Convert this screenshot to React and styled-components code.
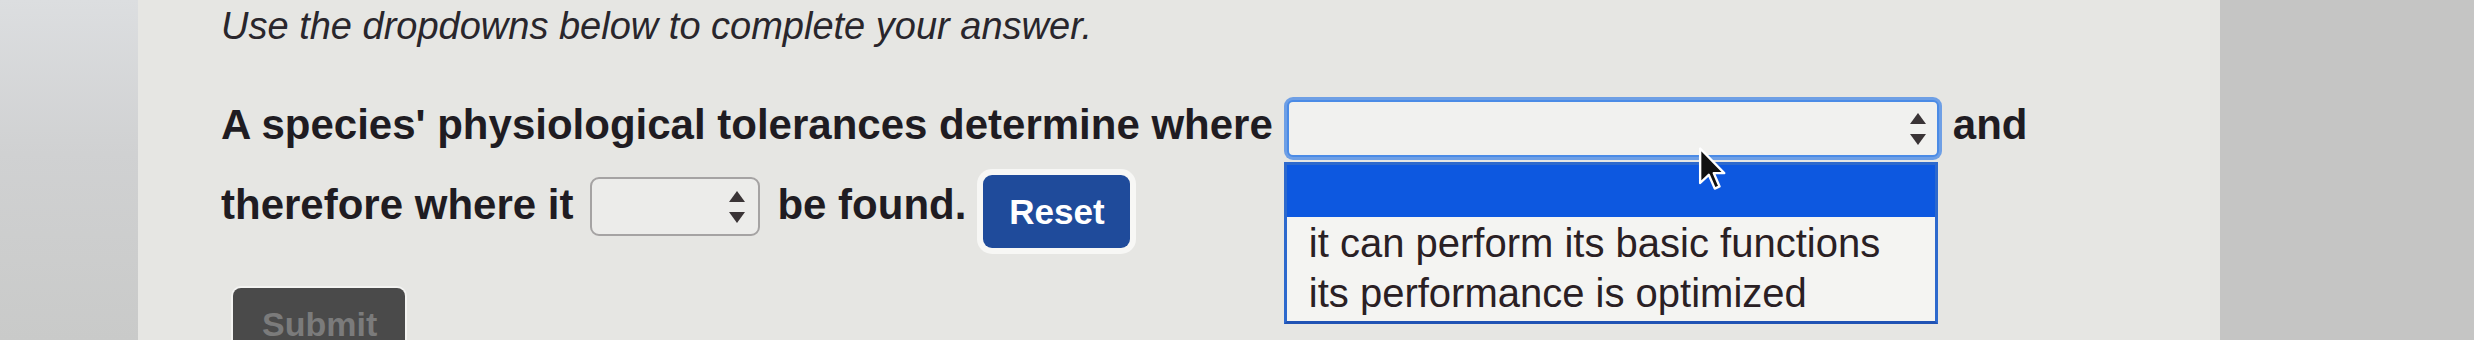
import React from "react";
import styled, { createGlobalStyle } from "styled-components";

const GlobalStyle = createGlobalStyle`
  html, body {
    margin: 0;
    padding: 0;
    height: 340px;
    overflow: hidden;
    background: #e4e4e2;
  }
  body {
    font-family: "Liberation Sans", Arial, Helvetica, sans-serif;
  }
`;

const options = [
  "it can perform its basic functions",
  "its performance is optimized",
];

const SpinArrows = () => (
  <svg width="18" height="32" viewBox="0 0 18 32">
    <polygon points="1,11 9,0 17,11" fill="#3a3436" />
    <polygon points="1,21 9,32 17,21" fill="#3a3436" />
  </svg>
);

const Cursor = () => (
  <svg width="28" height="46" viewBox="-1 -1 13 21">
    <path
      d="M0 0 L0 16 L4 12.2 L6.8 18.6 L9 17.6 L6.3 11.4 L11.2 11.4 Z"
      fill="#111"
      stroke="#fff"
      strokeWidth="1.1"
      strokeLinejoin="round"
    />
  </svg>
);

const App = () => {
  return (
    <>
      <GlobalStyle />
      <Page>
        <LeftStrip />
        <Main>
          <Instruction>Use the dropdowns below to complete your answer.</Instruction>

          <Row $mt={52} $gap={14}>
            <BoldText $lh={49}>A species' physiological tolerances determine where</BoldText>
            <SelectBox $w={652} $h={57} $focused>
              <SpinArrows />
              <ListBox>
                <Highlight />
                {options.map((o) => (
                  <Option key={o}>{o}</Option>
                ))}
              </ListBox>
              <CursorSpot>
                <Cursor />
              </CursorSpot>
            </SelectBox>
            <BoldText $lh={49}>and</BoldText>
          </Row>

          <Row $mt={18} $gap={17}>
            <BoldText $lh={59}>therefore where it</BoldText>
            <SelectBox $w={170} $h={59} $mt={2}>
              <SpinArrows />
            </SelectBox>
            <BoldText $lh={59}>be found.</BoldText>
            <ResetButton>Reset</ResetButton>
          </Row>

          <SubmitButton>Submit</SubmitButton>
        </Main>
        <RightStrip />
      </Page>
    </>
  );
};

export default App;

const Page = styled.div`
  display: flex;
  height: 340px;
  overflow: hidden;
`;

const LeftStrip = styled.div`
  width: 138px;
  flex-shrink: 0;
  background: linear-gradient(180deg, #dcdee0 0%, #d0d1d2 45%, #c9cac9 100%);
`;

const RightStrip = styled.div`
  width: 254px;
  flex-shrink: 0;
  background: #c5c5c4;
`;

const Main = styled.div`
  flex: 1;
  background: #e6e6e3;
  padding: 4px 0 0 83px;
  display: flex;
  flex-direction: column;
  align-items: flex-start;
  color: #1f1c22;
`;

const Instruction = styled.div`
  font-size: 38px;
  font-style: italic;
  line-height: 44px;
  color: #29262c;
  white-space: nowrap;
`;

const Row = styled.div`
  display: flex;
  align-items: flex-start;
  gap: ${(p) => p.$gap}px;
  margin-top: ${(p) => p.$mt}px;
`;

const BoldText = styled.span`
  font-size: 42px;
  font-weight: 700;
  line-height: ${(p) => p.$lh}px;
  white-space: nowrap;
`;

const SelectBox = styled.div`
  position: relative;
  box-sizing: border-box;
  width: ${(p) => p.$w}px;
  height: ${(p) => p.$h}px;
  margin-top: ${(p) => p.$mt || 0}px;
  display: flex;
  align-items: center;
  justify-content: flex-end;
  padding-right: ${(p) => (p.$focused ? 10 : 12)}px;
  background: ${(p) => (p.$focused ? "#f1f1ef" : "#ececea")};
  border: 2px solid ${(p) => (p.$focused ? "#4b8be6" : "#a5a3a3")};
  border-radius: ${(p) => (p.$focused ? 6 : 9)}px;
  box-shadow: ${(p) => (p.$focused ? "0 0 0 3px rgba(70, 135, 230, 0.75)" : "none")};
`;

const ListBox = styled.div`
  position: absolute;
  top: 60px;
  left: -5px;
  width: 654px;
  box-sizing: border-box;
  border: 3px solid #2d69cd;
  border-bottom-color: #2053b4;
  background: #f4f4f2;
  padding-bottom: 3px;
  z-index: 2;
`;

const Highlight = styled.div`
  height: 52px;
  margin-bottom: 1px;
  background: #0d58e0;
`;

const Option = styled.div`
  font-size: 40px;
  line-height: 50px;
  padding-left: 22px;
  color: #2a2024;
  white-space: nowrap;
`;

const CursorSpot = styled.div`
  position: absolute;
  left: 409px;
  top: 44px;
  z-index: 3;
  line-height: 0;
`;

const ResetButton = styled.button`
  width: 147px;
  height: 73px;
  border: none;
  border-radius: 9px;
  background: #1f4b9b;
  color: #ffffff;
  font-family: inherit;
  font-size: 35px;
  font-weight: 700;
  padding: 0;
  box-shadow: 0 0 0 6px #f7f7f5;
`;

const SubmitButton = styled.button`
  margin: 40px 0 0 12px;
  width: 172px;
  height: 70px;
  box-sizing: border-box;
  border: none;
  border-radius: 8px 8px 0 0;
  background: #4a4a4a;
  color: #7b7b7b;
  font-family: inherit;
  font-size: 34px;
  font-weight: 700;
  line-height: 40px;
  text-align: left;
  padding: 16px 0 0 29px;
  box-shadow: 0 0 0 2px rgba(255, 255, 255, 0.55);
`;
